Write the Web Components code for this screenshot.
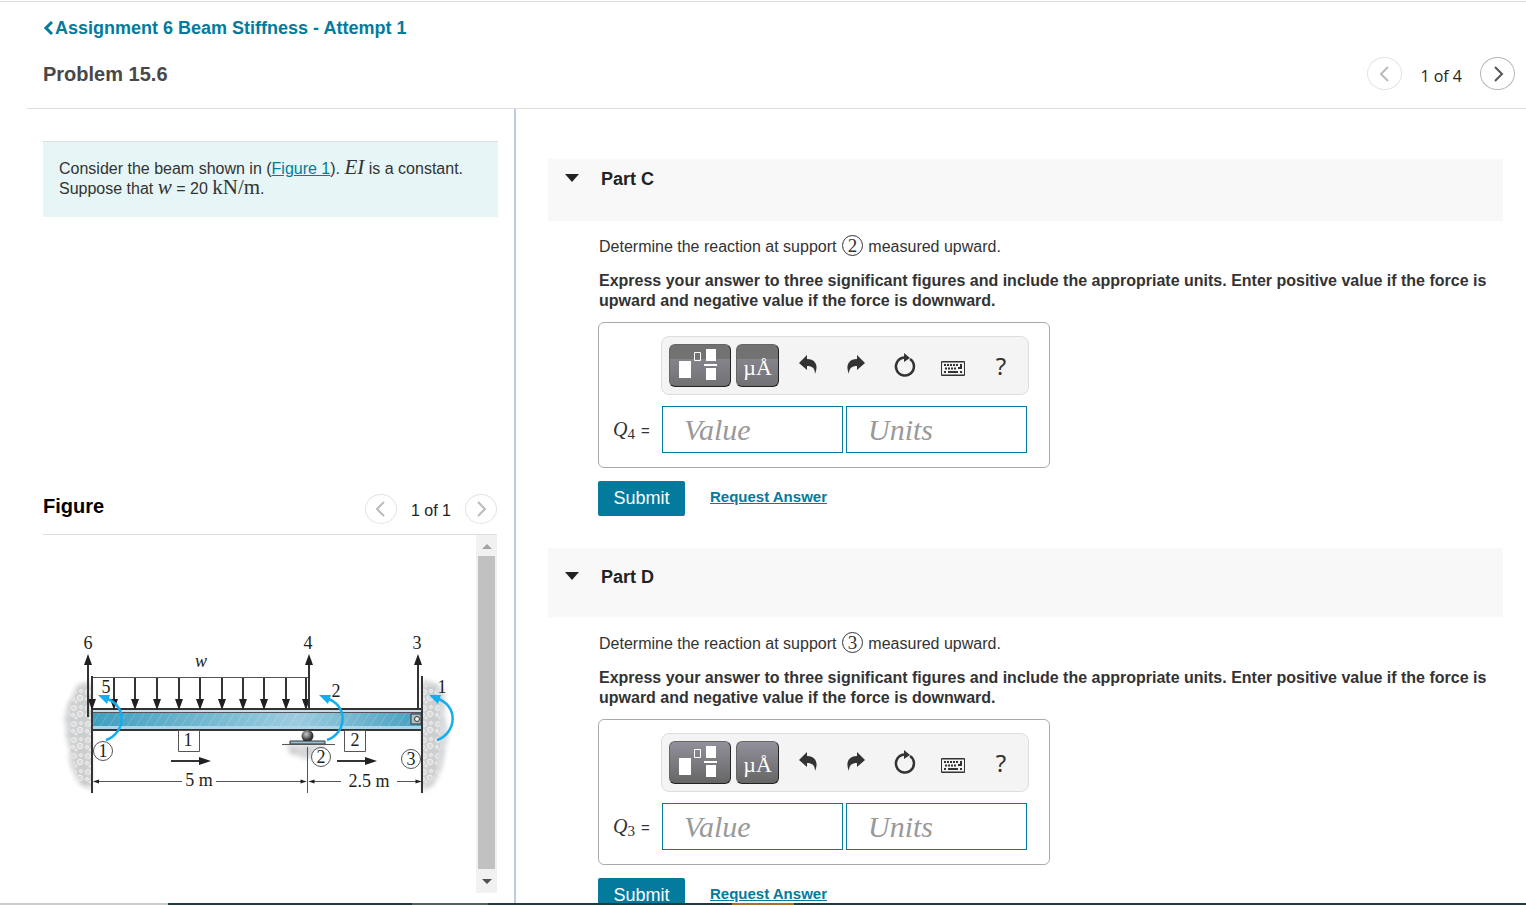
<!DOCTYPE html>
<html lang="en">
<head>
<meta charset="utf-8">
<title>Problem 15.6</title>
<style>
  html, body { height: 100%; }
  body { margin: 0; overflow: hidden; background: #fff; color: #333; font-family: "Liberation Sans", Arial, sans-serif; font-size: 16px; line-height: 20px; }
</style>
</head>
<body>
<assignment-page></assignment-page>
<script>
const define = (name, html, setup) => {
  const template = document.createElement('template');
  template.innerHTML = html;
  customElements.define(name, class extends HTMLElement {
    static observedAttributes = ['label', 'index', 'tone', 'node'];
    constructor() {
      super();
      this.attachShadow({ mode: 'open' }).append(template.content.cloneNode(true));
    }
    connectedCallback() { if (setup) setup(this, this.shadowRoot); }
    attributeChangedCallback() { if (setup) setup(this, this.shadowRoot); }
  });
};

define('page-control', `
  <style>
    :host { display: flex; align-items: center; gap: 14px; color: #222; }
    button { width: 32px; height: 30px; padding: 0; border: 1px solid #e3e3e3; border-radius: 50%; background: #fff; color: #bbb; display: grid; place-items: center; }
    svg { width: 16px; height: 16px; fill: none; stroke: currentColor; stroke-width: 2; }
    span { padding-top: 4px; }
    :host([size="large"]) { gap: 18px; font-family: "Open Sans", sans-serif; }
    :host([size="large"]) button { width: 35px; height: 33px; }
    :host([size="large"]) .next { border-color: #b5b5b5; color: #555; }
  </style>
  <button class="prev" aria-label="Previous" disabled><svg viewBox="0 0 16 16"><path d="M11 1 4 8l7 7"/></svg></button>
  <span></span>
  <button class="next" aria-label="Next"><svg viewBox="0 0 16 16"><path d="m5 1 7 7-7 7"/></svg></button>
`, (host, root) => { root.querySelector('span').textContent = host.getAttribute('label'); });

define('assignment-header', `
  <style>
    :host { display: block; border-top: 1px solid #ddd; margin-top: 1px; }
    header { margin-left: 27px; padding: 16px 11px 18px 16px; border-bottom: 1px solid #ddd; }
    a { display: flex; align-items: center; gap: 2px; color: #047a9c; font-weight: bold; font-size: 18px; line-height: 20px; text-decoration: none; }
    svg { width: 10px; height: 14px; fill: none; stroke: currentColor; stroke-width: 3; }
    .row { display: flex; justify-content: space-between; align-items: center; margin-top: 19px; }
    h1 { margin: 0; font-size: 20px; line-height: 24px; color: #484848; }
  </style>
  <header>
    <a href="#assignment"><svg viewBox="0 0 10 14"><path d="M9 1 3 7l6 6"/></svg>Assignment 6 Beam Stiffness - Attempt 1</a>
    <div class="row"><h1>Problem 15.6</h1><page-control size="large" label="1 of 4"></page-control></div>
  </header>
`);

define('problem-statement', `
  <style>
    :host { display: block; margin: 32px 16px 0 43px; padding: 17px 16px 18px; border-top: 1px solid #ddd; background: #e6f6f6; }
    p { margin: 0; }
    a { color: #047a9c; }
    i, b { font-family: "Liberation Serif", serif; font-size: 21px; line-height: 0; font-weight: normal; }
  </style>
  <p>Consider the beam shown in (<a href="#figure">Figure 1</a>). <i>EI</i> is a constant. Suppose that <i>w</i> = 20 <b>kN/m</b>.</p>
`);

define('beam-diagram', `
  <style>
    :host { display: block; width: 420px; max-width: 100%; }
    svg { display: block; width: 100%; }
    text { font: 18px "Liberation Serif", serif; fill: #231f20; text-anchor: middle; }
    .w { font-style: italic; }
    .ink { stroke: #333; stroke-width: 2; fill: none; }
    .thin { stroke: #555; stroke-width: 1; fill: none; }
    .turn { stroke: #12aeef; stroke-width: 2.5; fill: none; }
    .cyan { fill: #12aeef; }
    .head { fill: #231f20; }
  </style>
  <svg viewBox="50 620 420 190" role="img" aria-label="Beam with uniform load and supports">
    <defs>
      <linearGradient id="steel"><stop offset="0" stop-color="#3f9fbe"/><stop offset=".62" stop-color="#9dcbdf"/><stop offset="1" stop-color="#459fbf"/></linearGradient>
      <radialGradient id="ball" cx=".4" cy=".35"><stop offset="0" stop-color="#ccc"/><stop offset="1" stop-color="#333"/></radialGradient>
      <pattern id="stones" width="14" height="16" patternUnits="userSpaceOnUse">
        <rect width="14" height="16" fill="#cbccce"/>
        <g fill="#d8d9db" stroke="#f8f8f8"><circle cx="4" cy="4" r="2.500"/><circle cx="11" cy="3" r="1.500"/><circle cx="10" cy="10" r="2.700"/><circle cx="3" cy="11" r="1.500"/><circle cx="6" cy="14" r="1"/></g>
      </pattern>
      <pattern id="brush" width="9" height="14" patternUnits="userSpaceOnUse"><path d="M0 14 9 0" stroke="#fff" stroke-opacity=".18"/></pattern>
      <filter id="soft" x="-20%" y="-20%" width="140%" height="140%"><feGaussianBlur stdDeviation="2"/></filter>
      <g id="load"><path class="ink" d="M0 678v24"/><path class="head" d="M-4 699h8l-4 11z"/></g>
      <g id="reaction"><path class="ink" d="M0 709v-46"/><path class="head" d="M-4 665h8l-4-11z"/></g>
      <g id="moment"><path class="turn" d="M8 740C28 733 30 705 7 698"/><path class="cyan" d="m0 695 12 0-3 9z"/></g>
      <g id="direction"><path class="ink" d="M0 761h30"/><path class="head" d="M28 757l12 4-12 4z"/></g>
    </defs>
    <g filter="url(#soft)" fill="url(#stones)">
      <path d="M92 682c-10-3-18 4-20 14-6 9-9 19-7 30 0 10 2 16 5 24-3 12 3 25 10 35l12 6z"/>
      <path d="M422 680c8 0 17 2 23 14v24c5 13 3 24 0 34 0 14-7 28-13 35l-10 5z"/>
      <path d="M285 744h42l-6 12-16 3-15-5z"/>
    </g>
    <g fill="url(#stones)" opacity=".7"><path d="M92 687H79l-8 18v46l8 30 13 7zM422 685l14 3 4 14v46l-5 26-13 12z"/></g>
    <path d="M92 709h330v22H92z" fill="#c2dfec"/>
    <path d="M92 713h330v13H92z" fill="url(#steel)"/><path d="M92 713h330v13H92z" fill="url(#brush)"/>
    <path d="M92 726h330v4H92z" fill="#a9d6e9"/>
    <path class="ink" d="M92 709h330M92 730h330"/><path class="thin" d="M92 712.500h330"/>
    <path class="thin" d="M91 677.500h218M182 781.500H94M216 781.500h90M310 781.500h31M397 781.500h24M307.500 747v46"/>
    <path class="ink" d="M92 676v117M422 676v117"/>
    <path class="ink" d="M88 717v-54"/>
    <use href="#load" x="92"/><use href="#load" x="114"/><use href="#load" x="135"/><use href="#load" x="157"/><use href="#load" x="179"/><use href="#load" x="200"/><use href="#load" x="222"/><use href="#load" x="243"/><use href="#load" x="264"/><use href="#load" x="286"/><use href="#load" x="306"/>
    <use href="#reaction" x="88"/><use href="#reaction" x="309"/><use href="#reaction" x="418"/>
    <path d="M411 714h10v10h-10z" fill="#b5bcc0" stroke="#333"/><circle cx="417" cy="719" r="2.500" fill="#eee" stroke="#333"/>
    <circle cx="307.500" cy="736" r="6" fill="url(#ball)"/>
    <path d="M290 741h35v3h-35z" fill="#8fc0d4" stroke="#333"/><path class="thin" d="M282 744.500h53"/>
    <use href="#moment" x="98"/><use href="#moment" x="319"/><use href="#moment" x="429"/>
    <g fill="#fff" stroke="#555"><path d="M178.500 730.500h21v21h-21zM344.500 730.500h21v21h-21z"/><circle cx="103" cy="751" r="9.500"/><circle cx="321" cy="757" r="9.500"/><circle cx="411" cy="759" r="9.500"/></g>
    <use href="#direction" x="171"/><use href="#direction" x="337"/>
    <path class="head" d="m93 781.500 6-2v4zm213.500 0-6-2v4zm2 0 6-2v4zm113 0-6-2v4z"/>
    <text x="88" y="649">6</text><text x="308" y="649">4</text><text x="417" y="649">3</text><text class="w" x="201" y="667">w</text>
    <text x="106" y="693">5</text><text x="336" y="697">2</text><text x="442" y="693">1</text>
    <text x="188" y="746">1</text><text x="355" y="746">2</text>
    <text x="103" y="757">1</text><text x="321" y="763">2</text><text x="411" y="765">3</text>
    <text x="199" y="786">5 m</text><text x="369" y="787">2.5 m</text>
  </svg>
`);

define('figure-panel', `
  <style>
    :host { display: flex; flex-direction: column; margin: 0 17px 10px 43px; min-height: 0; }
    .top { display: flex; justify-content: space-between; align-items: center; padding-bottom: 10px; border-bottom: 1px solid #ddd; }
    h2 { margin: 0; padding-bottom: 6px; font-size: 20px; line-height: 24px; color: #000; }
    .view { flex: 1; display: flex; min-height: 0; justify-content: space-between; }
    beam-diagram { margin: 85px 0 0 7px; }
    .bar { flex: none; width: 21px; display: flex; flex-direction: column; align-items: center; background: #f1f1f1; }
    .bar svg { width: 10px; height: 21px; fill: #a3a3a3; }
    .bar .down { height: 24px; fill: #505050; }
    .thumb { flex: 1; width: 17px; background: #c1c1c1; }
  </style>
  <div class="top"><h2>Figure</h2><page-control label="1 of 1"></page-control></div>
  <div class="view" id="figure"><beam-diagram></beam-diagram>
    <div class="bar"><svg viewBox="0 0 10 21"><path d="m5 9 5 5H0z"/></svg><div class="thumb"></div><svg class="down" viewBox="0 0 10 24"><path d="m5 15 5-5H0z"/></svg></div>
  </div>
`);

define('math-toolbar', `
  <style>
    :host { display: flex; align-items: center; box-sizing: border-box; height: 59px; padding: 0 3px 0 7px; border: 1px solid #ddd; border-radius: 8px; background: #f4f4f4; }
    button { box-sizing: border-box; padding: 0; border: 0; background: none; color: #333; display: grid; place-items: center; flex: 1; height: 43px; font: 24px "Noto Sans", sans-serif; }
    .dark { flex: none; width: 62px; margin-right: 5px; color: #fff; border: 1px solid #666; border-right-color: #222; border-bottom-color: #222; border-radius: 6px; background: linear-gradient(#727272 0 34%, #85848c 34%, #717174); }
    .units { width: 43px; padding-top: 4px; font: 22px/26px "Liberation Serif", serif; }
    :host([tone="smooth"]) .dark { background: linear-gradient(#92909b, #666); }
    svg { width: 28px; height: 28px; fill: #333; }
    .templates svg { width: 60px; height: 41px; fill: #fff; }
    .ring { fill: none; stroke: #333; stroke-width: 2.500; }
  </style>
  <button class="dark templates" aria-label="Templates"><svg viewBox="0 0 60 41"><path d="M9 16h12v17H9zM36 4h10v12H36zM34 19h13v2H34zM36 23h10v12H36z"/><path d="M24.500 7.500h6v8h-6z" fill="none" stroke="#fff"/></svg></button>
  <button class="dark units" aria-label="Symbols">µÅ</button>
  <button aria-label="Undo"><svg viewBox="0 0 28 28"><path d="m5 11 8-8v4c8 0 12 6 8 15 0-6-3-8-8-8v4z"/></svg></button>
  <button aria-label="Redo"><svg viewBox="0 0 28 28"><path d="m23 11-8-8v4c-8 0-12 6-8 15 0-6 3-8 8-8v4z"/></svg></button>
  <button aria-label="Reset"><svg viewBox="0 0 28 28"><path class="ring" d="M13 5.500a9 9 0 1 0 6 1.500"/><path d="M13 1l6 5-6 4z"/></svg></button>
  <button aria-label="Keyboard"><svg viewBox="0 0 28 28"><path d="M3 9h22a1 1 0 0 1 1 1v13a1 1 0 0 1-1 1H3a1 1 0 0 1-1-1V10a1 1 0 0 1 1-1zm0 1.500v12h22v-12z" fill-rule="evenodd"/><path d="M5 12h2v2H5zm3 0h2v2H8zm3 0h2v2h-2zm3 0h2v2h-2zm3 0h2v2h-2zm4 0h2v5h-4v-2h2zM6 15.500h2v2H6zm3 0h2v2H9zm3 0h2v2h-2zm3 0h2v2h-2zM5 19h2v2H5zm4 0h10v2H9zm12 0h2v2h-2z"/></svg></button>
  <button aria-label="Help">?</button>
`);

define('answer-form', `
  <style>
    :host { display: block; }
    .box { box-sizing: border-box; width: 452px; max-width: 100%; display: grid; grid-template-columns: 48px 181px 181px; column-gap: 3px; row-gap: 11px; align-items: center; padding: 13px 20px 14px 12px; border: 1px solid #aaa; border-radius: 6px; }
    math-toolbar { grid-column: 2 / 4; margin-right: -2px; margin-left: -1px; }
    label { display: flex; align-items: baseline; gap: 6px; padding-left: 2px; white-space: nowrap; font-size: 15px; }
    i { font-family: "Liberation Serif", serif; font-size: 20px; line-height: 20px; }
    sub { font-family: "Liberation Serif", serif; font-size: 15px; vertical-align: -3px; line-height: 0; }
    input { box-sizing: border-box; width: 100%; height: 47px; padding: 0 21px; border: 1px solid #047a9c; border-radius: 0; font: italic 30px "Liberation Serif", serif; color: #333; }
    input::placeholder { color: #999; opacity: 1; }
    .actions { display: flex; align-items: center; gap: 25px; margin-top: 13px; }
    button { width: 87px; height: 35px; padding: 0; border: 0; border-radius: 2px; background: #047a9c; color: #fff; font: 18px "Liberation Sans", sans-serif; }
    a { color: #047a9c; font-weight: bold; font-size: 15px; line-height: 18px; padding-bottom: 3px; }
  </style>
  <form>
    <div class="box">
      <math-toolbar></math-toolbar>
      <label for="value"><span><i>Q</i><sub></sub></span>=</label>
      <input id="value" placeholder="Value"><input aria-label="Units" placeholder="Units">
    </div>
    <div class="actions"><button type="button">Submit</button><a href="#answer">Request Answer</a></div>
  </form>
`, (host, root) => {
  root.querySelector('sub').textContent = host.getAttribute('index');
  if (host.hasAttribute('tone')) root.querySelector('math-toolbar').setAttribute('tone', host.getAttribute('tone'));
});

define('problem-part', `
  <style>
    :host { display: block; }
    .head { box-sizing: border-box; display: flex; align-items: flex-start; gap: 22px; height: 62px; padding: 10px 17px; background: #f8f8f8; }
    :host([spacious]) .head { height: 69px; padding-top: 19px; }
    .head svg { width: 14px; height: 8px; margin-top: 5px; fill: #222; }
    h2 { margin: 0; font-size: 18px; line-height: 20px; color: #222; }
    .body { padding: 15px 0 0 51px; }
    :host([spacious]) .body { padding-top: 16px; }
    p { margin: 0 -4px 14px 0; }
    .ask { font-weight: bold; margin-bottom: 11px; }
    .node { display: inline-block; box-sizing: border-box; width: 21px; height: 21px; margin: -1px 1px; border: 1px solid #333; border-radius: 50%; font: 19px/19px "Liberation Serif", serif; text-align: center; }
    answer-form { margin-left: -1px; }
  </style>
  <section>
    <div class="head"><svg viewBox="0 0 14 8"><path d="M0 0h14L7 8z"/></svg><h2><slot name="title"></slot></h2></div>
    <div class="body">
      <p>Determine the reaction at support <span class="node"></span> measured upward.</p>
      <p class="ask"><slot></slot></p>
      <answer-form></answer-form>
    </div>
  </section>
`, (host, root) => {
  root.querySelector('.node').textContent = host.getAttribute('node');
  const form = root.querySelector('answer-form');
  form.setAttribute('index', host.getAttribute('index'));
  if (host.hasAttribute('spacious')) form.setAttribute('tone', 'smooth');
});

define('assignment-page', `
  <style>
    :host { display: flex; flex-direction: column; height: 100vh; }
    main { flex: 1; min-height: 0; display: flex; }
    aside { box-sizing: border-box; flex: 0 0 516px; display: grid; grid-template-rows: auto 1fr 409px; border-right: 2px solid #b9cce0; }
    .parts { flex: 1; min-width: 0; padding: 50px 23px 0 32px; overflow: hidden; display: flex; flex-direction: column; gap: 32px; }
    problem-part { flex: none; }
    .edge { height: 2px; background: linear-gradient(90deg, #ccc 0 11%, #25383c 11% 27%, #53625d 27% 32%, #25383c 32% 48%, #a86f32 48% 52%, #25383c 52%); }
  </style>
  <assignment-header></assignment-header>
  <main>
    <aside><problem-statement></problem-statement><span></span><figure-panel></figure-panel></aside>
    <div class="parts">
      <problem-part node="2" index="4"><span slot="title">Part C</span>Express your answer to three significant figures and include the appropriate units. Enter positive value if the force is upward and negative value if the force is downward.</problem-part>
      <problem-part node="3" index="3" spacious><span slot="title">Part D</span>Express your answer to three significant figures and include the appropriate units. Enter positive value if the force is upward and negative value if the force is downward.</problem-part>
    </div>
  </main>
  <div class="edge"></div>
`);
</script>
</body>
</html>
